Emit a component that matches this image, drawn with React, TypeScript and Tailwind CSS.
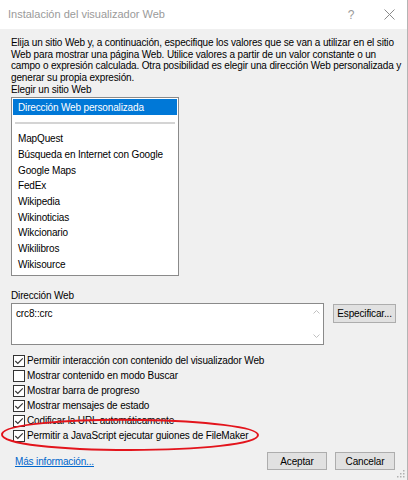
import React from 'react';

const sites = [
  'MapQuest',
  'Búsqueda en Internet con Google',
  'Google Maps',
  'FedEx',
  'Wikipedia',
  'Wikinoticias',
  'Wikcionario',
  'Wikilibros',
  'Wikisource',
];

const options = [
  { label: 'Permitir interacción con contenido del visualizador Web', checked: true },
  { label: 'Mostrar contenido en modo Buscar', checked: false },
  { label: 'Mostrar barra de progreso', checked: true },
  { label: 'Mostrar mensajes de estado', checked: true },
  { label: 'Codificar la URL automáticamente', checked: true },
  { label: 'Permitir a JavaScript ejecutar guiones de FileMaker', checked: true },
];

function Checkbox({ checked }: { checked: boolean }) {
  return (
    <span className="w-[12px] h-[12px] border border-[#333] bg-white flex items-center justify-center shrink-0">
      {checked && (
        <svg width="10" height="10" viewBox="0 0 10 10">
          <path d="M1.3 5 L3.8 7.5 L8.8 2.3" fill="none" stroke="#333" strokeWidth="1.1" />
        </svg>
      )}
    </span>
  );
}

export default function App() {
  return (
    <div className="relative w-[408px] h-[480px] overflow-hidden bg-[#f0f0f0] text-black font-['Liberation_Sans',Arial,sans-serif] text-[10px] tracking-[-0.15px] border-r border-[#b4b4b4]">
      {/* Title bar */}
      <div className="h-[29px] bg-white flex items-center pl-[8px] pr-[12px] text-[11px] tracking-normal text-[#9a9a9a]">
        <span className="flex-1">Instalación del visualizador Web</span>
        <span className="w-[12px] text-center mr-[27px] text-[12px]">?</span>
        <svg width="11" height="11" viewBox="0 0 11 11">
          <path d="M0.5 0.5 L10.5 10.5 M10.5 0.5 L0.5 10.5" stroke="#8a8a8a" strokeWidth="1" />
        </svg>
      </div>

      <div className="px-[11px]">
        <p className="mt-[8px] leading-[11.5px] whitespace-nowrap">
          Elija un sitio Web y, a continuación, especifique los valores que se van a utilizar en el sitio<br />
          Web para mostrar una página Web. Utilice valores a partir de un valor constante o un<br />
          campo o expresión calculada. Otra posibilidad es elegir una dirección Web personalizada y<br />
          generar su propia expresión.
        </p>

        <p className="leading-[13px]">Elegir un sitio Web</p>

        {/* Site list */}
        <div className="mt-[1px] w-[168px] h-[179px] bg-white border border-[#8a8a8a] p-[1px]">
          <div className="h-[16px] bg-[#0078d7] text-white flex items-center pl-[5px]">Dirección Web personalizada</div>
          <div className="h-[16px] flex items-center px-[2px]">
            <div className="h-[2px] w-full bg-[#d4d4d4]" />
          </div>
          {sites.map((s) => (
            <div key={s} className="h-[15.7px] flex items-center pl-[5px]">{s}</div>
          ))}
        </div>

        <p className="mt-[13px] leading-[14px]">Dirección Web</p>

        <div className="flex items-start gap-[9px]">
          <div className="w-[314px] h-[42px] bg-white border border-[#8a8a8a] flex">
            <div className="flex-1 pl-[4px] pt-[3px] leading-[13px]">crc8::crc</div>
            <div className="w-[14px] flex flex-col items-center justify-between py-[6px]">
              <svg width="7" height="4" viewBox="0 0 7 4">
                <path d="M0.5 3.5 L3.5 0.5 L6.5 3.5" fill="none" stroke="#c0c0c0" strokeWidth="1" />
              </svg>
              <svg width="7" height="4" viewBox="0 0 7 4">
                <path d="M0.5 0.5 L3.5 3.5 L6.5 0.5" fill="none" stroke="#c0c0c0" strokeWidth="1" />
              </svg>
            </div>
          </div>
          <button className="mt-[1px] w-[63px] h-[19px] bg-[#e1e1e1] border border-[#adadad] flex items-center justify-center">
            Especificar...
          </button>
        </div>

        {/* Options */}
        <div className="mt-[8px] pl-[2px] flex flex-col">
          {options.map((o) => (
            <label key={o.label} className="h-[15px] flex items-center gap-[2px]">
              <Checkbox checked={o.checked} />
              <span>{o.label}</span>
            </label>
          ))}
        </div>

        {/* Footer */}
        <div className="mt-[9px] flex items-end">
          <a className="ml-[4px] mb-[1px] flex-1 text-[#0066cc] underline">Más información...</a>
          <button className="w-[60px] h-[18px] bg-[#e1e1e1] border border-[#adadad]">Aceptar</button>
          <button className="ml-[8px] mr-[1px] w-[60px] h-[18px] bg-[#e1e1e1] border border-[#adadad]">Cancelar</button>
        </div>
      </div>

      {/* Red annotation ellipse */}
      <svg className="absolute left-0 top-[412px] pointer-events-none" width="264" height="44" viewBox="0 412 264 44">
        <path
          d="M2 434 C 4 424, 70 419, 140 420 C 205 421, 258 427, 258 435 C 258 444, 200 450, 130 450 C 60 450, 0 444, 2 434 Z"
          fill="none"
          stroke="#e3141c"
          strokeWidth="2"
        />
      </svg>

      {/* Resize grip */}
      <svg className="absolute right-[2px] bottom-[2px]" width="9" height="9" viewBox="0 0 9 9">
        <rect x="7" y="1" width="1.5" height="1.5" fill="#b0b0b0" />
        <rect x="4" y="4" width="1.5" height="1.5" fill="#b0b0b0" />
        <rect x="7" y="4" width="1.5" height="1.5" fill="#b0b0b0" />
        <rect x="1" y="7" width="1.5" height="1.5" fill="#b0b0b0" />
        <rect x="4" y="7" width="1.5" height="1.5" fill="#b0b0b0" />
        <rect x="7" y="7" width="1.5" height="1.5" fill="#b0b0b0" />
      </svg>
    </div>
  );
}
